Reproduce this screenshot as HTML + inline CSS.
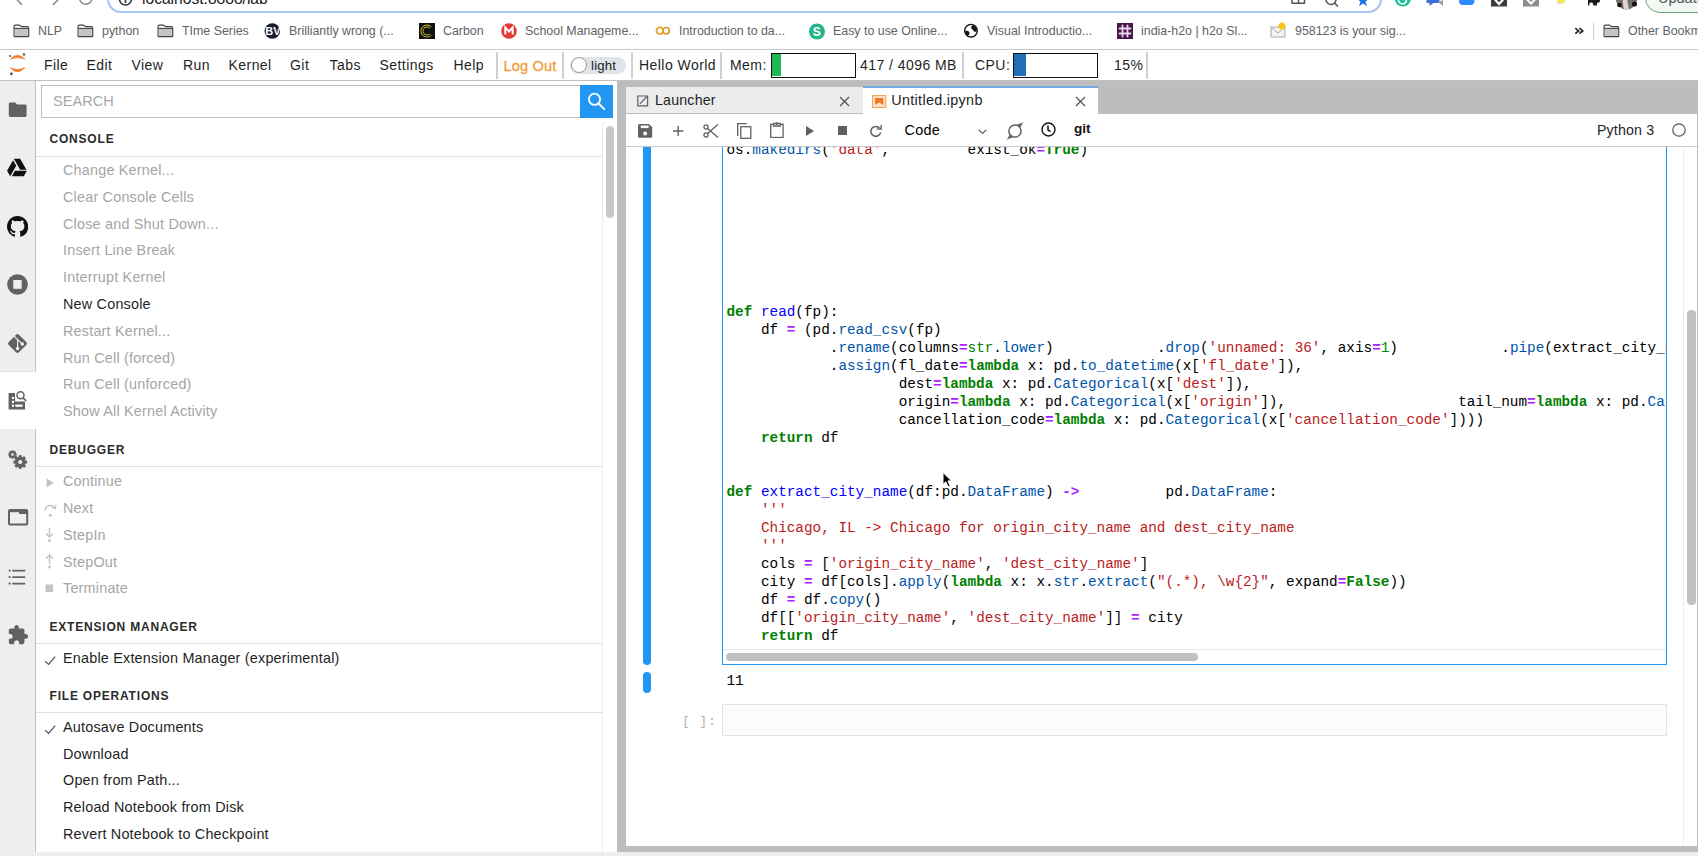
<!DOCTYPE html>
<html><head><meta charset="utf-8">
<style>
*{box-sizing:border-box;margin:0;padding:0}
html,body{width:1698px;height:856px;overflow:hidden;background:#fff;font-family:"Liberation Sans",sans-serif;color:#000}
.a{position:absolute}
#top{left:0;top:0;width:1698px;height:13px;background:#fff}
#bm{left:0;top:13px;width:1698px;height:37px;background:#fff;border-bottom:1px solid #c8c8c8}
.bmt{position:absolute;top:10px;font-size:12.4px;color:#5f6368;white-space:nowrap;line-height:16px}
#menu{left:0;top:50px;width:1698px;height:31px;background:#fff;border-bottom:1px solid #c0c0c0}
.mi{position:absolute;top:6.9px;font-size:14px;letter-spacing:0.45px;color:#1f1f1f;line-height:16px;white-space:nowrap}
.div{position:absolute;top:2px;width:2px;height:27px;background:#d0d0d0}
#lb{left:0;top:81px;width:36px;height:772px;background:#eeeeee;border-right:1px solid #c0c0c0}
#panel{left:36px;top:81px;width:581px;height:772px;background:#fff}
#dock{left:617px;top:81px;width:1081px;height:772px;background:#bdbdbd}
#status{left:0;top:852px;width:1698px;height:4px;background:#eeeeee}
.si{position:absolute;left:27px;font-size:14.4px;letter-spacing:0.2px;color:#999;white-space:nowrap;line-height:16px}
.sh{position:absolute;left:13.5px;font-size:12px;font-weight:bold;letter-spacing:0.8px;color:#2b2b2b;white-space:nowrap;line-height:14px}
.shl{position:absolute;left:0;width:566px;height:1px;background:#e0e0e0}
.code{position:absolute;font-family:"Liberation Mono",monospace;font-size:14.35px;line-height:18px;white-space:pre;color:#000}
.k{color:#008000;font-weight:bold}
.d{color:#0000ff}
.v{color:#0055aa}
.o{color:#aa22ff;font-weight:bold}
.s{color:#ba2121}
.n{color:#008800}
.b{color:#008000}
</style></head><body>
<div id="top" class="a">
<svg class="a" style="left:0;top:0" width="300" height="13">
<path d="M22 -10 L15 -2.5 L22 5" fill="none" stroke="#8a8a8a" stroke-width="1.5"/>
<path d="M53 -10 L60 -2.5 L53 5" fill="none" stroke="#8a8a8a" stroke-width="1.5"/>
<path d="M79.5 -2 A6.3 6.3 0 0 0 92 -1" fill="none" stroke="#8a8a8a" stroke-width="1.5"/>
</svg>
<div class="a" style="left:107px;top:-30px;width:1275px;height:43px;border:2px solid #a7c3f2;border-radius:14px;background:#fff"></div>
<svg class="a" style="left:117px;top:0" width="18" height="10"><circle cx="8.5" cy="-1" r="6" fill="none" stroke="#333" stroke-width="1.6"/><rect x="7.7" y="0" width="1.6" height="3" fill="#333"/></svg>
<div class="a" style="left:142px;top:-10.5px;font-size:15.6px;color:#202124;line-height:18px;white-space:nowrap">localhost:8888/lab</div>
<svg class="a" style="left:1280px;top:0" width="418" height="13">
<path d="M11.5 3.2 h13.5 M12 -1 v4 M18.5 -1 v4 M24.5 -1 v4" stroke="#555" stroke-width="1.5"/>
<circle cx="51" cy="-0.5" r="5" fill="none" stroke="#555" stroke-width="1.5"/><path d="M54.5 3 L58 6.5" stroke="#555" stroke-width="1.6"/>
<path d="M83 -6 L84.5 -1.5 L89 -1.2 L85.5 1.8 L87 6.2 L83 3.6 L79 6.2 L80.5 1.8 L77 -1.2 L81.5 -1.5 Z" fill="#1a73e8"/>
<circle cx="122.8" cy="-1.5" r="8" fill="#15c39a"/><path d="M119 -2 a4 4 0 1 0 7.5 1.5 h-3" stroke="#fff" stroke-width="1.6" fill="none"/>
<path d="M146.5 -6 h13 v9 h-6 l-4 3 v-3 h-3 Z" fill="#3f6fd8"/><path d="M158 2 l5 4 v-6 Z" fill="#9aa0a6"/>
<rect x="179" y="-8" width="15.4" height="13" rx="4" fill="#2d8cff"/><rect x="182" y="-5" width="7" height="5" rx="1" fill="#fff"/>
<rect x="211" y="-7" width="16" height="13.5" fill="#3a3a3a"/><path d="M214.5 -1 L219 4 L223.5 -1" fill="none" stroke="#fff" stroke-width="2.2"/>
<rect x="243" y="-7" width="16" height="13.5" fill="#8d8d8d"/><path d="M246.5 -1 L251 3.5 L255.5 -1" fill="none" stroke="#fff" stroke-width="2"/>
<path d="M276 -4 L287 -4 L284 3.5 L278 3.5 Z" fill="#f5e74a"/><path d="M276 3 h6" stroke="#c9d3f0" stroke-width="1"/>
<path d="M308 -4 h9 v3 a2 2 0 1 1 0 3.5 v3 h-4 a2 2 0 1 0 -3.5 0 h-1.5 Z" fill="#1a1a1a"/>
<circle cx="346.5" cy="-1" r="10.6" fill="#6f6f6f"/><path d="M343 -8 Q348 -4 347.5 2 L349 9.6 L344 9.3 Q342 3 343 -8 Z" fill="#e4d0cc"/><circle cx="339.5" cy="5" r="2.3" fill="#111"/><circle cx="354.5" cy="4" r="2.5" fill="#111"/>
</svg>
<div class="a" style="left:1645px;top:-20px;width:90px;height:32.5px;border:1.3px solid #6aa27a;border-radius:15px;background:#f2f8f3"></div>
<div class="a" style="left:1658px;top:-10px;font-size:14.5px;color:#555;line-height:16px">Update</div>
</div>
<div id="bm" class="a"><svg class="a" style="left:13px;top:10.5px" width="17" height="15"><path d="M1.1 12.2 V2.2 Q1.1 1.1 2.2 1.1 H6.2 Q6.9 1.1 7.4 1.7 L8.3 2.6 H14.6 Q15.7 2.6 15.7 3.7 V12.2 Q15.7 12.6 15.3 12.6 H1.5 Q1.1 12.6 1.1 12.2 Z" fill="#fff" stroke="#444" stroke-width="1.2"/><rect x="1.7" y="4.6" width="13.4" height="7.4" fill="#c4c4c4"/><path d="M1.1 4.4 H15.7" stroke="#444" stroke-width="1.1"/></svg>
<div class="bmt" style="left:38px">NLP</div>
<svg class="a" style="left:77px;top:10.5px" width="17" height="15"><path d="M1.1 12.2 V2.2 Q1.1 1.1 2.2 1.1 H6.2 Q6.9 1.1 7.4 1.7 L8.3 2.6 H14.6 Q15.7 2.6 15.7 3.7 V12.2 Q15.7 12.6 15.3 12.6 H1.5 Q1.1 12.6 1.1 12.2 Z" fill="#fff" stroke="#444" stroke-width="1.2"/><rect x="1.7" y="4.6" width="13.4" height="7.4" fill="#c4c4c4"/><path d="M1.1 4.4 H15.7" stroke="#444" stroke-width="1.1"/></svg>
<div class="bmt" style="left:102px">python</div>
<svg class="a" style="left:157px;top:10.5px" width="17" height="15"><path d="M1.1 12.2 V2.2 Q1.1 1.1 2.2 1.1 H6.2 Q6.9 1.1 7.4 1.7 L8.3 2.6 H14.6 Q15.7 2.6 15.7 3.7 V12.2 Q15.7 12.6 15.3 12.6 H1.5 Q1.1 12.6 1.1 12.2 Z" fill="#fff" stroke="#444" stroke-width="1.2"/><rect x="1.7" y="4.6" width="13.4" height="7.4" fill="#c4c4c4"/><path d="M1.1 4.4 H15.7" stroke="#444" stroke-width="1.1"/></svg>
<div class="bmt" style="left:182px">TIme Series</div>
<svg class="a" style="left:264px;top:10px" width="17" height="17"><circle cx="8.3" cy="8" r="7.8" fill="#1b1b2f"/><text x="1.3" y="12.3" font-family="Liberation Sans" font-weight="bold" font-size="11" fill="#fff">BV</text></svg>
<div class="bmt" style="left:289px">Brilliantly wrong (...</div>
<svg class="a" style="left:419px;top:10px" width="17" height="17"><rect x="0" y="0" width="16" height="16" fill="#111"/><path d="M11.5 4.5 A5 5 0 1 0 11.5 11.5" fill="none" stroke="#c9b53a" stroke-width="3"/><path d="M11.5 4.5 A5 5 0 1 0 11.5 11.5" fill="none" stroke="#111" stroke-width="1.2"/></svg>
<div class="bmt" style="left:443px">Carbon</div>
<svg class="a" style="left:501px;top:10px" width="17" height="17"><circle cx="8" cy="8" r="7.8" fill="#e53935"/><path d="M4.3 11.5 V4.5 L8 8.5 L11.7 4.5 V11.5" fill="none" stroke="#fff" stroke-width="2"/></svg>
<div class="bmt" style="left:525px">School Manageme...</div>
<svg class="a" style="left:655px;top:10px" width="17" height="17"><circle cx="4.8" cy="7.7" r="3.3" fill="none" stroke="#e3a12a" stroke-width="1.7"/><circle cx="11.1" cy="7.7" r="3.2" fill="none" stroke="#e09a2c" stroke-width="1.7"/></svg>
<div class="bmt" style="left:679px">Introduction to da...</div>
<svg class="a" style="left:809px;top:10px" width="17" height="17"><circle cx="8" cy="8.5" r="8" fill="#26b38a"/><text x="3.8" y="13" font-family="Liberation Sans" font-weight="bold" font-size="12" fill="#fff">S</text></svg>
<div class="bmt" style="left:833px">Easy to use Online...</div>
<svg class="a" style="left:963px;top:10px" width="17" height="17"><circle cx="8" cy="7.7" r="6.3" fill="#fff" stroke="#111" stroke-width="1.4"/><path d="M8.3 3.2 Q10.5 1.8 12.8 3.6 Q14.2 6 13.6 8.6 Q11.5 9.4 10.2 7.6 Q9.2 5.8 8.3 5.6 Z M2 8.3 Q3.8 7.2 5.6 8.2 Q7.2 9.6 6.4 11 Q5.6 12.8 4.4 12.6 Q2.2 10.8 2 8.3 Z" fill="#111"/></svg>
<div class="bmt" style="left:987px">Visual Introductio...</div>
<svg class="a" style="left:1117px;top:10px" width="17" height="17"><rect x="0" y="0" width="16" height="16" fill="#4a154b"/><path d="M5.5 2.5 V13.5 M10.5 2.5 V13.5 M2.5 5.5 H13.5 M2.5 10.5 H13.5" stroke="#e9d8ea" stroke-width="1.8" stroke-linecap="round"/></svg>
<div class="bmt" style="left:1141px">india-h2o | h2o Sl...</div>
<svg class="a" style="left:1270px;top:8px" width="18" height="19"><rect x="1" y="6" width="14" height="10" fill="#f2f2f2" stroke="#aaa" stroke-width="1"/><path d="M1 6 L8 12 L15 6" fill="none" stroke="#aaa" stroke-width="1"/><circle cx="12" cy="5" r="3.5" fill="#f5c518"/></svg>
<div class="bmt" style="left:1295px">958123 is your sig...</div>
<svg class="a" style="left:1572px;top:12px" width="14" height="12"><path d="M3.3 3.2 L6.6 5.9 L3.3 8.6 M7.4 3.2 L10.7 5.9 L7.4 8.6" fill="none" stroke="#222" stroke-width="1.7"/></svg>
<div class="a" style="left:1593px;top:9.7px;width:1px;height:17px;background:#cfcfcf"></div>
<svg class="a" style="left:1603px;top:10.5px" width="17" height="15"><path d="M1.1 12.2 V2.2 Q1.1 1.1 2.2 1.1 H6.2 Q6.9 1.1 7.4 1.7 L8.3 2.6 H14.6 Q15.7 2.6 15.7 3.7 V12.2 Q15.7 12.6 15.3 12.6 H1.5 Q1.1 12.6 1.1 12.2 Z" fill="#fff" stroke="#444" stroke-width="1.2"/><rect x="1.7" y="4.6" width="13.4" height="7.4" fill="#c4c4c4"/><path d="M1.1 4.4 H15.7" stroke="#444" stroke-width="1.1"/></svg>
<div class="bmt" style="left:1628px">Other Bookmarks</div></div>
<div id="menu" class="a"><svg class="a" style="left:0;top:0" width="36" height="30">
<path d="M10.3 9 Q17.5 1.6 24.8 9 Q17.5 6.2 10.3 9 Z" fill="#f37726" stroke="#f37726" stroke-width="0.7"/>
<path d="M10.3 17.6 Q17.5 26 24.8 17.6 Q17.5 21.4 10.3 17.6 Z" fill="#f37726" stroke="#f37726" stroke-width="0.7"/>
<circle cx="10" cy="6" r="1.1" fill="#616161"/><circle cx="24" cy="4.5" r="1.3" fill="#616161"/><circle cx="11.4" cy="23.8" r="1.5" fill="#616161"/>
</svg>
<div class="mi" style="left:44px">File</div>
<div class="mi" style="left:86.5px">Edit</div>
<div class="mi" style="left:131.5px">View</div>
<div class="mi" style="left:183px">Run</div>
<div class="mi" style="left:228.5px">Kernel</div>
<div class="mi" style="left:290px">Git</div>
<div class="mi" style="left:329.5px">Tabs</div>
<div class="mi" style="left:379.5px">Settings</div>
<div class="mi" style="left:453.5px">Help</div>
<div class="div" style="left:496px"></div>
<div class="mi" style="left:503.5px;top:8px;color:#f2a03d;font-size:14.5px;letter-spacing:0.2px;-webkit-text-stroke:0.35px #f2a03d">Log Out</div>
<div class="div" style="left:562px"></div>
<div class="a" style="left:570px;top:7px;width:56px;height:16.5px;border-radius:8.5px;background:#dfe3ea"></div>
<div class="a" style="left:570.5px;top:7.3px;width:16px;height:16px;border-radius:50%;background:#fff;border:1.2px solid #9a9a9a"></div>
<div class="mi" style="left:591px;top:7.8px;font-size:13.2px;letter-spacing:0.2px;color:#222">light</div>
<div class="div" style="left:631px"></div>
<div class="mi" style="left:639px">Hello World</div>
<div class="div" style="left:720px"></div>
<div class="mi" style="left:730px">Mem:</div>
<div class="a" style="left:771px;top:3px;width:85px;height:24.5px;border:1.5px solid #111;background:#fff"><div class="a" style="left:0;top:0;width:8.5px;height:21.5px;background:#1db954"></div></div>
<div class="mi" style="left:860px">417 / 4096 MB</div>
<div class="div" style="left:962px"></div>
<div class="mi" style="left:975px">CPU:</div>
<div class="a" style="left:1013px;top:3px;width:85px;height:24.5px;border:1.5px solid #111;background:#fff"><div class="a" style="left:0;top:0;width:12px;height:21.5px;background:#1f6fb8"></div></div>
<div class="mi" style="left:1114px">15%</div>
<div class="div" style="left:1146px"></div></div>
<div id="lb" class="a"><div class="a" style="left:0;top:290px;width:36px;height:57.5px;background:#fff;border-top:1px solid #e0e0e0"></div>
<svg class="a" style="left:8.4px;top:20.599999999999994px" width="20" height="16"><path d="M0.8 2 Q0.8 0.6 2.2 0.6 H7.2 L9.2 2.6 H17.2 Q18.6 2.6 18.6 4 V13.6 Q18.6 15 17.2 15 H2.2 Q0.8 15 0.8 13.6 Z" fill="#616161"/></svg>
<svg class="a" style="left:6.3px;top:75.69999999999999px" width="22" height="22" viewBox="0 0 24 24"><path d="M7.71,3.5L1.15,15L4.58,21L11.13,9.5M9.73,15L6.3,21H19.42L22.85,15M22.28,14L15.42,2H8.58L8.57,2L15.43,14H22.28Z" fill="#111"/></svg>
<svg class="a" style="left:6.9px;top:135px" width="21.2" height="21.2" viewBox="0 0 16 16"><path d="M8 0C3.58 0 0 3.58 0 8c0 3.54 2.29 6.53 5.47 7.59.4.07.55-.17.55-.38 0-.19-.01-.82-.01-1.49-2.01.37-2.53-.49-2.69-.94-.09-.23-.48-.94-.82-1.13-.28-.15-.68-.52-.01-.53.63-.01 1.08.58 1.23.82.72 1.21 1.87.87 2.33.66.07-.52.28-.87.51-1.07-1.78-.2-3.64-.89-3.64-3.95 0-.87.31-1.590.82-2.15-.08-.2-.36-1.02.08-2.12 0 0 .67-.21 2.2.82.64-.18 1.32-.27 2-.27.68 0 1.36.09 2 .27 1.53-1.04 2.2-.82 2.2-.82.44 1.1.16 1.92.08 2.12.51.56.82 1.27.82 2.15 0 3.07-1.87 3.75-3.65 3.95.29.25.54.73.54 1.48 0 1.07-.01 1.93-.01 2.2 0 .21.15.46.55.38A8.013 8.013 0 0016 8c0-4.42-3.58-8-8-8z" fill="#111"/></svg>
<svg class="a" style="left:6.9px;top:192.89999999999998px" width="21" height="21"><circle cx="10.5" cy="10.5" r="10.3" fill="#616161"/><rect x="6.3" y="6" width="8.4" height="8.8" fill="#eee"/></svg>
<svg class="a" style="left:6.9px;top:251.8px" width="21" height="21"><rect x="3.3" y="3.3" width="14.4" height="14.4" rx="2" fill="#616161" transform="rotate(45 10.5 10.5)"/><path d="M5.6 1.7 L10.6 6.6 V15.6 M10.6 6.6 L15.3 11" stroke="#eee" stroke-width="1.2" fill="none"/><circle cx="10.6" cy="15.5" r="1.8" fill="#eee"/><circle cx="15.3" cy="11" r="1.8" fill="#eee"/></svg>
<svg class="a" style="left:4px;top:304px" width="28" height="30"><path d="M5.2 8 Q4.6 8 4.6 8.6 V24 Q4.6 24.6 5.2 24.6 H20.4 Q21 24.6 21 24 V16.5 H11 V8 Z" fill="#616161"/><rect x="7.9" y="11.8" width="2.1" height="2.2" fill="#fff"/><rect x="7.9" y="15.8" width="2.1" height="2.2" fill="#fff"/><rect x="7.9" y="19.6" width="2.1" height="2.2" fill="#fff"/><rect x="11.3" y="19.6" width="7.3" height="2.2" fill="#fff"/><circle cx="16.5" cy="10.2" r="3.5" fill="none" stroke="#616161" stroke-width="1.5"/><path d="M19 12.8 L22.3 15.8" stroke="#616161" stroke-width="1.6"/></svg>
<svg class="a" style="left:8px;top:369px" width="20" height="20"><rect x="3.4" y="0.2899999999999998" width="2.2" height="2.4200000000000004" fill="#616161" transform="rotate(0 4.5 4.5)"/><rect x="3.4" y="0.2899999999999998" width="2.2" height="2.4200000000000004" fill="#616161" transform="rotate(45 4.5 4.5)"/><rect x="3.4" y="0.2899999999999998" width="2.2" height="2.4200000000000004" fill="#616161" transform="rotate(90 4.5 4.5)"/><rect x="3.4" y="0.2899999999999998" width="2.2" height="2.4200000000000004" fill="#616161" transform="rotate(135 4.5 4.5)"/><rect x="3.4" y="0.2899999999999998" width="2.2" height="2.4200000000000004" fill="#616161" transform="rotate(180 4.5 4.5)"/><rect x="3.4" y="0.2899999999999998" width="2.2" height="2.4200000000000004" fill="#616161" transform="rotate(225 4.5 4.5)"/><rect x="3.4" y="0.2899999999999998" width="2.2" height="2.4200000000000004" fill="#616161" transform="rotate(270 4.5 4.5)"/><rect x="3.4" y="0.2899999999999998" width="2.2" height="2.4200000000000004" fill="#616161" transform="rotate(315 4.5 4.5)"/><circle cx="4.5" cy="4.5" r="3.2" fill="#616161"/><circle cx="4.5" cy="4.5" r="1.3" fill="#eee"/><rect x="10.7" y="5.1499999999999995" width="3.0" height="3.3000000000000003" fill="#616161" transform="rotate(0 12.2 12.0)"/><rect x="10.7" y="5.1499999999999995" width="3.0" height="3.3000000000000003" fill="#616161" transform="rotate(45 12.2 12.0)"/><rect x="10.7" y="5.1499999999999995" width="3.0" height="3.3000000000000003" fill="#616161" transform="rotate(90 12.2 12.0)"/><rect x="10.7" y="5.1499999999999995" width="3.0" height="3.3000000000000003" fill="#616161" transform="rotate(135 12.2 12.0)"/><rect x="10.7" y="5.1499999999999995" width="3.0" height="3.3000000000000003" fill="#616161" transform="rotate(180 12.2 12.0)"/><rect x="10.7" y="5.1499999999999995" width="3.0" height="3.3000000000000003" fill="#616161" transform="rotate(225 12.2 12.0)"/><rect x="10.7" y="5.1499999999999995" width="3.0" height="3.3000000000000003" fill="#616161" transform="rotate(270 12.2 12.0)"/><rect x="10.7" y="5.1499999999999995" width="3.0" height="3.3000000000000003" fill="#616161" transform="rotate(315 12.2 12.0)"/><circle cx="12.2" cy="12" r="5.4" fill="#616161"/><circle cx="12.2" cy="12" r="2.1" fill="#eee"/></svg>
<svg class="a" style="left:7.9px;top:428px" width="21" height="17"><rect x="1" y="1" width="18.2" height="14.5" rx="1" fill="none" stroke="#616161" stroke-width="2"/><rect x="1" y="1" width="18.2" height="2.2" fill="#616161"/><rect x="11" y="1" width="8.2" height="4" fill="#616161"/></svg>
<svg class="a" style="left:8.2px;top:488.29999999999995px" width="18" height="17"><circle cx="1.6" cy="1.6" r="1.1" fill="#616161"/><circle cx="1.6" cy="8.1" r="1.1" fill="#616161"/><circle cx="1.6" cy="14.6" r="1.1" fill="#616161"/><rect x="4.2" y="0.8" width="13" height="1.7" fill="#616161"/><rect x="4.2" y="7.3" width="13" height="1.7" fill="#616161"/><rect x="4.2" y="13.8" width="13" height="1.7" fill="#616161"/></svg>
<svg class="a" style="left:6.8px;top:542.5px" width="22" height="22" viewBox="0 0 24 24"><path d="M20.5 11H19V7c0-1.1-.9-2-2-2h-4V3.5C13 2.12 11.88 1 10.5 1S8 2.12 8 3.5V5H4c-1.1 0-1.99.9-1.99 2v3.8H3.5c1.49 0 2.7 1.21 2.7 2.7s-1.21 2.7-2.7 2.7H2V20c0 1.1.9 2 2 2h3.8v-1.5c0-1.49 1.21-2.7 2.7-2.7 1.49 0 2.7 1.21 2.7 2.7V22H17c1.1 0 2-.9 2-2v-4h1.5c1.38 0 2.5-1.12 2.5-2.5S21.88 11 20.5 11z" fill="#616161"/></svg></div>
<div id="panel" class="a"><div class="a" style="left:5px;top:4px;width:540px;height:32.5px;border:1px solid #bdbdbd;border-right:none;background:#fff"></div>
<div class="a" style="left:17px;top:12.14px;font-size:14.6px;line-height:16px;color:#a8a8a8">SEARCH</div>
<div class="a" style="left:544px;top:4px;width:33px;height:32.7px;background:#2196f3"></div>
<svg class="a" style="left:544px;top:4px" width="33" height="33"><circle cx="14.5" cy="14.3" r="5.6" fill="none" stroke="#fff" stroke-width="1.8"/><path d="M18.6 18.5 L24.3 24.2" stroke="#fff" stroke-width="1.9" stroke-linecap="round"/></svg>
<div class="a" style="left:566px;top:41px;width:1px;height:731px;background:#ededed"></div>
<div class="a" style="left:570px;top:45px;width:8px;height:92px;border-radius:4px;background:#c8c8c8"></div>
<div class="sh" style="top:50.84px">CONSOLE</div>
<div class="shl" style="top:75.00px"></div>
<div class="si" style="left:27px;top:81.11px;color:#a5a5a5">Change Kernel...</div>
<div class="si" style="left:27px;top:107.89px;color:#a5a5a5">Clear Console Cells</div>
<div class="si" style="left:27px;top:134.67px;color:#a5a5a5">Close and Shut Down...</div>
<div class="si" style="left:27px;top:161.45px;color:#a5a5a5">Insert Line Break</div>
<div class="si" style="left:27px;top:188.23px;color:#a5a5a5">Interrupt Kernel</div>
<div class="si" style="left:27px;top:215.01px;color:#1f1f1f">New Console</div>
<div class="si" style="left:27px;top:241.79px;color:#a5a5a5">Restart Kernel...</div>
<div class="si" style="left:27px;top:268.57px;color:#a5a5a5">Run Cell (forced)</div>
<div class="si" style="left:27px;top:295.35px;color:#a5a5a5">Run Cell (unforced)</div>
<div class="si" style="left:27px;top:322.13px;color:#a5a5a5">Show All Kernel Activity</div>
<div class="sh" style="top:361.94px">DEBUGGER</div>
<div class="shl" style="top:385.00px"></div>
<div class="si" style="left:27px;top:392.21px;color:#a5a5a5">Continue</div>
<div class="si" style="left:27px;top:418.99px;color:#a5a5a5">Next</div>
<div class="si" style="left:27px;top:445.77px;color:#a5a5a5">StepIn</div>
<div class="si" style="left:27px;top:472.55px;color:#a5a5a5">StepOut</div>
<div class="si" style="left:27px;top:499.33px;color:#a5a5a5">Terminate</div>
<div class="sh" style="top:538.94px">EXTENSION MANAGER</div>
<div class="shl" style="top:561.80px"></div>
<div class="si" style="left:27px;top:569.21px;color:#1f1f1f">Enable Extension Manager (experimental)</div>
<div class="sh" style="top:608.44px">FILE OPERATIONS</div>
<div class="shl" style="top:631.30px"></div>
<div class="si" style="left:27px;top:637.91px;color:#1f1f1f">Autosave Documents</div>
<div class="si" style="left:27px;top:664.69px;color:#1f1f1f">Download</div>
<div class="si" style="left:27px;top:691.47px;color:#1f1f1f">Open from Path...</div>
<div class="si" style="left:27px;top:718.25px;color:#1f1f1f">Reload Notebook from Disk</div>
<div class="si" style="left:27px;top:745.03px;color:#1f1f1f">Revert Notebook to Checkpoint</div>
<svg class="a" style="left:8px;top:396px" width="16" height="16"><path d="M2.6 1.3 L9.8 5.9 L2.6 10.5 Z" fill="#c4c4c4"/></svg>
<svg class="a" style="left:7px;top:421px" width="16" height="16"><path d="M2 8.5 A5.3 5.3 0 0 1 11.8 6" fill="none" stroke="#c4c4c4" stroke-width="1.4"/><path d="M8.8 5.2 L12.2 6.6 L13 3" fill="none" stroke="#c4c4c4" stroke-width="1.4"/><circle cx="7.3" cy="13.3" r="1.5" fill="#c4c4c4"/></svg>
<svg class="a" style="left:7px;top:446px" width="16" height="16"><path d="M6.5 1 V10 M3 6.5 L6.5 10 L10 6.5" fill="none" stroke="#c4c4c4" stroke-width="1.4"/><circle cx="6.5" cy="13.5" r="1.5" fill="#c4c4c4"/></svg>
<svg class="a" style="left:7px;top:472px" width="16" height="16"><path d="M6.5 11 V2 M3 5.5 L6.5 2 L10 5.5" fill="none" stroke="#c4c4c4" stroke-width="1.4"/><circle cx="6.5" cy="14" r="1.5" fill="#c4c4c4"/></svg>
<svg class="a" style="left:7px;top:500px" width="16" height="16"><rect x="2.5" y="3.5" width="7.5" height="7.5" fill="#c4c4c4"/></svg>
<svg class="a" style="left:7.5px;top:574px" width="13" height="11"><path d="M1.2 6.2 L4.6 9.4 L11.2 1.6" fill="none" stroke="#555" stroke-width="1.3"/></svg>
<svg class="a" style="left:7.5px;top:643px" width="13" height="11"><path d="M1.2 6.2 L4.6 9.4 L11.2 1.6" fill="none" stroke="#555" stroke-width="1.3"/></svg></div>
<div id="dock" class="a"><div class="a" style="left:8.799999999999955px;top:5.799999999999997px;width:236.9000000000001px;height:27.400000000000006px;background:#ececec;border-bottom:1px solid #bdbdbd"></div>
<svg class="a" style="left:19.60px;top:13.80px" width="12" height="12"><path d="M7.5 1 H0.8 V10.8 H10.6 V4" fill="none" stroke="#616161" stroke-width="1.2"/><path d="M2.8 8.8 L10.6 1" fill="none" stroke="#616161" stroke-width="1.2"/><path d="M7.5 1 H10.6 V4" fill="none" stroke="#616161" stroke-width="1.2"/></svg>
<div class="a" style="left:38.00px;top:10.78px;font-size:14.2px;letter-spacing:0.2px;color:#1f1f1f;font-weight:normal;line-height:16px;white-space:nowrap;">Launcher</div>
<svg class="a" style="left:221.50px;top:14.80px" width="11" height="11"><path d="M1 1 L10 10 M10 1 L1 10" stroke="#555" stroke-width="1.3"/></svg>
<div class="a" style="left:245.7px;top:4.7px;width:235.3px;height:28.8px;background:#fff;border-top:2px solid #72a9e3"></div>
<svg class="a" style="left:255.00px;top:13.50px" width="15" height="13"><rect x="0.6" y="0.6" width="13.2" height="11.8" fill="#fbe3cc" stroke="#f6a85a" stroke-width="1.2"/><path d="M3 3 H11.4 V10 L7.2 7.6 L3 10 Z" fill="#f37726"/></svg>
<div class="a" style="left:274.30px;top:10.81px;font-size:14.4px;letter-spacing:0.3px;color:#1f1f1f;font-weight:normal;line-height:16px;white-space:nowrap;">Untitled.ipynb</div>
<svg class="a" style="left:458.20px;top:15.20px" width="11" height="11"><path d="M1 1 L10 10 M10 1 L1 10" stroke="#555" stroke-width="1.3"/></svg>
<div class="a" style="left:9px;top:33.2px;width:1071px;height:731.8px;background:#fff"></div>
<div class="a" style="left:9px;top:64.5px;width:1071px;height:1px;background:#c8c8c8"></div>
<svg class="a" style="left:21.00px;top:43.00px" width="15" height="14"><path d="M0 1.5 Q0 0 1.5 0 H11 L14.2 3.2 V12.2 Q14.2 13.7 12.7 13.7 H1.5 Q0 13.7 0 12.2 Z" fill="#616161"/><rect x="2.8" y="1.5" width="7.8" height="2.6" fill="#fff"/><circle cx="7.1" cy="9.4" r="2" fill="#fff"/></svg>
<svg class="a" style="left:55.90px;top:44.80px" width="11" height="11"><path d="M5.2 0 V10 M0 5 H10.4" stroke="#616161" stroke-width="1.4"/></svg>
<svg class="a" style="left:86.30px;top:43.00px" width="16" height="14.5"><circle cx="3" cy="3" r="2.1" fill="none" stroke="#616161" stroke-width="1.3"/><circle cx="3" cy="11" r="2.1" fill="none" stroke="#616161" stroke-width="1.3"/><path d="M4.6 4.4 L15 13.6 M4.6 9.6 L14.8 0.5" stroke="#616161" stroke-width="1.3"/></svg>
<svg class="a" style="left:119.50px;top:42.00px" width="15" height="16"><path d="M0.7 13 V0.7 H9.8" fill="none" stroke="#616161" stroke-width="1.3"/><rect x="3.8" y="3.7" width="10" height="11.6" fill="none" stroke="#616161" stroke-width="1.3"/></svg>
<svg class="a" style="left:153.20px;top:41.00px" width="14" height="16"><rect x="0.7" y="2.3" width="12.4" height="13.2" fill="none" stroke="#616161" stroke-width="1.3"/><path d="M3.5 1.5 H10.3 V4 H3.5 Z" fill="#fff" stroke="#616161" stroke-width="1.3"/><circle cx="6.9" cy="1.6" r="1.3" fill="#616161"/></svg>
<svg class="a" style="left:189.30px;top:44.80px" width="9" height="11"><path d="M0 0 L8 5 L0 10.1 Z" fill="#616161"/></svg>
<svg class="a" style="left:220.90px;top:45.30px" width="9" height="9"><rect x="0" y="0" width="9" height="9" fill="#616161"/></svg>
<svg class="a" style="left:253.00px;top:43.90px" width="12" height="12.5"><path d="M9.6 3.2 A4.9 4.9 0 1 0 10.6 7.4" fill="none" stroke="#616161" stroke-width="1.5"/><path d="M6.8 3.9 L11 4.2 L11.2 0" fill="none" stroke="#616161" stroke-width="1.4"/></svg>
<div class="a" style="left:287.50px;top:40.81px;font-size:14.4px;letter-spacing:0.3px;color:#000;font-weight:normal;line-height:16px;white-space:nowrap;">Code</div>
<svg class="a" style="left:361.10px;top:48.00px" width="9" height="6"><path d="M0.7 0.7 L4.5 4.4 L8.3 0.7" fill="none" stroke="#616161" stroke-width="1.2"/></svg>
<svg class="a" style="left:389.00px;top:41.00px" width="18" height="18"><circle cx="9" cy="9" r="6.1" fill="none" stroke="#616161" stroke-width="1.5"/><path d="M10.5 2.8 Q14.5 1.6 17.6 0.2 Q15.6 2.2 14.6 4.9 Z M7.5 15.2 Q3.5 16.4 0.4 17.8 Q2.4 15.8 3.4 13.1 Z" fill="#616161"/></svg>
<svg class="a" style="left:423.50px;top:40.50px" width="15" height="15"><circle cx="7.5" cy="7.5" r="6.5" fill="none" stroke="#111" stroke-width="1.4"/><path d="M7 3.6 V8 L9.5 9.6" fill="none" stroke="#111" stroke-width="1.5"/></svg>
<div class="a" style="left:457.00px;top:40.3px;font-size:13.6px;letter-spacing:0px;color:#111;font-weight:bold;line-height:16px;white-space:nowrap;">git</div>
<div class="a" style="left:980.00px;top:40.58px;font-size:14.2px;letter-spacing:0.15px;color:#1f1f1f;font-weight:normal;line-height:16px;white-space:nowrap;">Python 3</div>
<svg class="a" style="left:1054.50px;top:41.80px" width="14" height="14"><circle cx="7" cy="7" r="6.2" fill="none" stroke="#555" stroke-width="1.2"/></svg>
<div class="a" style="left:9px;top:65.5px;width:1071px;height:699.5px;overflow:hidden;background:#fff">
<div class="a" style="left:17px;top:-10px;width:8px;height:528.0px;background:#2196f3;border-radius:0 0 4px 4px"></div>
<div class="a" style="left:96.3px;top:-20px;width:944.6px;height:538.1px;border:1px solid #2196f3;background:#fff;overflow:hidden">
<div class="code" style="left:3.20px;top:13.38px">os.<span class="v">makedirs</span>(<span class="s">&#x27;data&#x27;</span>,         exist_ok<span class="o">=</span><span class="k">True</span>)








<span class="k">def</span> <span class="d">read</span>(fp):
    df <span class="o">=</span> (pd.<span class="v">read_csv</span>(fp)
            .<span class="v">rename</span>(columns<span class="o">=</span><span class="b">str</span>.<span class="v">lower</span>)            .<span class="v">drop</span>(<span class="s">&#x27;unnamed: 36&#x27;</span>, axis<span class="o">=</span><span class="n">1</span>)            .<span class="v">pipe</span>(extract_city_name)
            .<span class="v">assign</span>(fl_date<span class="o">=</span><span class="k">lambda</span> x: pd.<span class="v">to_datetime</span>(x[<span class="s">&#x27;fl_date&#x27;</span>]),
                    dest<span class="o">=</span><span class="k">lambda</span> x: pd.<span class="v">Categorical</span>(x[<span class="s">&#x27;dest&#x27;</span>]),
                    origin<span class="o">=</span><span class="k">lambda</span> x: pd.<span class="v">Categorical</span>(x[<span class="s">&#x27;origin&#x27;</span>]),                    tail_num<span class="o">=</span><span class="k">lambda</span> x: pd.<span class="v">Categorical</span>(x[<span class="s">&#x27;tail_num&#x27;</span>]),
                    cancellation_code<span class="o">=</span><span class="k">lambda</span> x: pd.<span class="v">Categorical</span>(x[<span class="s">&#x27;cancellation_code&#x27;</span>])))
    <span class="k">return</span> df


<span class="k">def</span> <span class="d">extract_city_name</span>(df:pd.<span class="v">DataFrame</span>) <span class="o">-&gt;</span>          pd.<span class="v">DataFrame</span>:
<span class="s">    &#x27;&#x27;&#x27;</span>
<span class="s">    Chicago, IL -&gt; Chicago for origin_city_name and dest_city_name</span>
<span class="s">    &#x27;&#x27;&#x27;</span>
    cols <span class="o">=</span> [<span class="s">&#x27;origin_city_name&#x27;</span>, <span class="s">&#x27;dest_city_name&#x27;</span>]
    city <span class="o">=</span> df[cols].<span class="v">apply</span>(<span class="k">lambda</span> x: x.<span class="v">str</span>.<span class="v">extract</span>(<span class="s">&quot;(.*), \w{2}&quot;</span>, expand<span class="o">=</span><span class="k">False</span>))
    df <span class="o">=</span> df.<span class="v">copy</span>()
    df[[<span class="s">&#x27;origin_city_name&#x27;</span>, <span class="s">&#x27;dest_city_name&#x27;</span>]] <span class="o">=</span> city
    <span class="k">return</span> df
</div>
<div class="a" style="left:0;top:521.4px;width:944px;height:20px;background:#fff;border-top:1px solid #e8e8e8"></div>
<div class="a" style="left:2.7px;top:525.5px;width:472px;height:8px;border-radius:4px;background:#c1c1c1"></div>
</div>
<div class="a" style="left:17px;top:525.0px;width:8px;height:21px;background:#2196f3;border-radius:4px"></div>
<div class="code" style="left:100.50px;top:525.88px">11</div>
<div class="code" style="left:56.3px;top:566px;font-size:12.4px;letter-spacing:1.2px;color:#b0b0b0">[ ]:</div>
<div class="a" style="left:96.3px;top:557.6px;width:944.6px;height:31.7px;border:1px solid #e3e3e3;background:#fcfcfc"></div>
<div class="a" style="left:1057px;top:0;width:1px;height:700px;background:#ececec"></div>
<div class="a" style="left:1061.4px;top:163.3px;width:8.2px;height:295.0px;border-radius:4px;background:#c1c1c1"></div>
</div>
</div>
<div id="status" class="a"></div>
<svg class="a" style="left:941px;top:471px" width="14" height="18"><path d="M2 1.5 V13.5 L4.8 10.8 L7.2 15.8 L9.2 14.8 L6.9 10 L10.4 9.8 Z" fill="#000" stroke="#fff" stroke-width="1"/></svg>
</body></html>
